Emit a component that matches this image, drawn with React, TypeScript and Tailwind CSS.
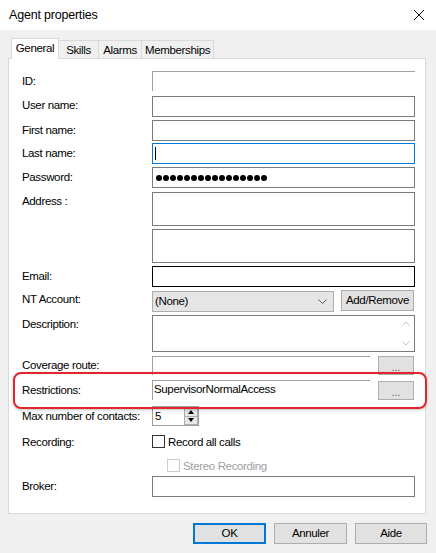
import React from 'react';

const font = "font-['Liberation_Sans',Arial,sans-serif]";

function Label({ children, className = '' }: { children: React.ReactNode; className?: string }) {
  return (
    <div className={`w-[143px] shrink-0 pl-[13px] text-[11.5px] leading-[14px] tracking-[-0.35px] text-black ${className}`}>
      {children}
    </div>
  );
}

function TextBox({ h = 21, className = '', children }: { h?: number; className?: string; children?: React.ReactNode }) {
  return (
    <div
      className={`w-[263px] bg-white border border-[#7a7a7a] flex items-center ${className}`}
      style={{ height: h }}
    >
      {children}
    </div>
  );
}

function DotsButton({ h }: { h: number }) {
  return (
    <div
      className="ml-[8px] w-[36px] bg-[#e1e1e1] border border-[#adadad] flex items-end justify-center pb-[1px] text-[10px] leading-[10px] text-[#555]"
      style={{ height: h }}
    >
      ...
    </div>
  );
}

function Tab({ label, active = false, w }: { label: string; active?: boolean; w: number }) {
  if (active) {
    return (
      <div
        className="h-[21px] -mb-px z-10 bg-white border border-b-0 border-[#d9d9d9] flex items-start justify-center pt-[2px] text-[11.5px] leading-[14px] tracking-[-0.35px]"
        style={{ width: w }}
      >
        {label}
      </div>
    );
  }
  return (
    <div
      className="h-[18px] bg-[#f0f0f0] border border-b-0 border-l-0 border-[#d9d9d9] flex items-center justify-center text-[11.5px] leading-[14px] tracking-[-0.35px]"
      style={{ width: w }}
    >
      {label}
    </div>
  );
}

export default function App() {
  return (
    <div className={`relative w-[436px] h-[553px] bg-[#f0f0f0] overflow-hidden ${font} text-black`}>
      {/* title bar */}
      <div className="h-[30px] bg-white flex items-center justify-between pl-[9px] pr-[11px]">
        <span className="text-[12.5px] tracking-[-0.2px]">Agent properties</span>
        <svg width="12" height="12" viewBox="0 0 12 12">
          <path d="M1 1 L11 11 M11 1 L1 11" stroke="#111" strokeWidth="1" fill="none" />
        </svg>
      </div>

      {/* tabs */}
      <div className="mt-[8px] ml-[11px] flex items-end relative">
        <Tab label="General" active w={48} />
        <Tab label="Skills" w={40} />
        <Tab label="Alarms" w={43} />
        <Tab label="Memberships" w={72} />
      </div>

      {/* panel */}
      <div className="ml-[8px] w-[418px] h-[456px] bg-white border border-[#d9d9d9] flex flex-col pb-[17px]">
        {/* ID */}
        <div className="mt-[12px] flex items-center h-[20px]">
          <Label>ID:</Label>
          <div className="w-[263px] h-[20px] border-t border-l border-[#a0a0a0]" />
        </div>
        {/* User name */}
        <div className="mt-[5px] flex items-center">
          <Label className="-mt-[4px]">User name:</Label>
          <TextBox />
        </div>
        <div className="mt-[3px] flex items-center">
          <Label className="-mt-[2px]">First name:</Label>
          <TextBox />
        </div>
        <div className="mt-[2px] flex items-center">
          <Label className="-mt-[2px]">Last name:</Label>
          <TextBox className="border-[#0078d7]">
            <div className="ml-[2px] w-px h-[13px] bg-black" />
          </TextBox>
        </div>
        <div className="mt-[3px] flex items-center">
          <Label className="-mt-[2px]">Password:</Label>
          <TextBox>
            <div className="ml-[3px] flex gap-[1px]">
              {Array.from({ length: 16 }).map((_, i) => (
                <div key={i} className="w-[6px] h-[6px] rounded-full bg-black" />
              ))}
            </div>
          </TextBox>
        </div>
        {/* Address */}
        <div className="mt-[4px] flex items-start">
          <Label className="pt-[2px]">Address :</Label>
          <TextBox h={34} />
        </div>
        <div className="mt-[3px] flex items-start">
          <Label />
          <TextBox h={34} />
        </div>
        {/* Email */}
        <div className="mt-[3px] flex items-center">
          <Label className="-mt-[2px]">Email:</Label>
          <TextBox className="border-black" />
        </div>
        {/* NT Account */}
        <div className="mt-[3px] flex items-start h-[22px]">
          <Label className="pt-[2px]">NT Account:</Label>
          <div className="mt-[1px] w-[182px] h-[21px] bg-[#e5e5e5] border border-[#adadad] flex items-center justify-between pl-[2px] pr-[6px] text-[11.5px] tracking-[-0.35px]">
            <span>(None)</span>
            <svg width="9" height="6" viewBox="0 0 9 6">
              <path d="M0.5 0.5 L4.5 4.5 L8.5 0.5" stroke="#555" strokeWidth="1" fill="none" />
            </svg>
          </div>
          <div className="ml-[7px] w-[73px] h-[21px] bg-[#e1e1e1] border border-[#adadad] flex items-center justify-center text-[11.5px] tracking-[-0.35px]">
            Add/Remove
          </div>
        </div>
        {/* Description */}
        <div className="mt-[3px] flex items-start">
          <Label className="pt-[2px]">Description:</Label>
          <TextBox h={37} className="justify-end items-stretch">
            <div className="w-[16px] flex flex-col justify-between items-center py-[5px] pr-[1px]">
              <svg width="8" height="5" viewBox="0 0 8 5">
                <path d="M0.5 4.5 L4 1 L7.5 4.5" stroke="#c2c2c2" strokeWidth="1" fill="none" />
              </svg>
              <svg width="8" height="5" viewBox="0 0 8 5">
                <path d="M0.5 0.5 L4 4 L7.5 0.5" stroke="#c2c2c2" strokeWidth="1" fill="none" />
              </svg>
            </div>
          </TextBox>
        </div>
        {/* Coverage route */}
        <div className="mt-[4px] flex items-start h-[19px]">
          <Label className="pt-[2px]">Coverage route:</Label>
          <div className="w-[218px] h-[19px] border-t border-l border-[#a0a0a0]" />
          <DotsButton h={19} />
        </div>
        {/* Restrictions */}
        <div className="mt-[5px] flex items-start h-[20px]">
          <Label className="pt-[3px]">Restrictions:</Label>
          <div className="w-[218px] h-[20px] border-t border-l border-[#a0a0a0] pl-px pt-[1px] text-[11.5px] leading-[14px] tracking-[-0.35px]">
            SupervisorNormalAccess
          </div>
          <div className="mt-px">
            <DotsButton h={19} />
          </div>
        </div>
        {/* Max number of contacts */}
        <div className="mt-[6px] flex items-center h-[20px]">
          <Label className="-mt-[1px]">Max number of contacts:</Label>
          <div className="w-[47px] h-[20px] border border-[#a0a0a0] bg-white flex">
            <div className="flex-1 pl-[2px] text-[11.5px] leading-[18px]">5</div>
            <div className="w-[14px] flex flex-col">
              <div className="flex-1 bg-[#e8e8e8] border border-[#adadad] flex items-center justify-center">
                <svg width="6" height="4" viewBox="0 0 6 4"><path d="M0 4 L3 0 L6 4 Z" fill="#000" /></svg>
              </div>
              <div className="flex-1 bg-[#e8e8e8] border border-t-0 border-[#adadad] flex items-center justify-center">
                <svg width="6" height="4" viewBox="0 0 6 4"><path d="M0 0 L3 4 L6 0 Z" fill="#000" /></svg>
              </div>
            </div>
          </div>
        </div>
        {/* Recording */}
        <div className="mt-[9px] flex items-center h-[13px]">
          <Label>Recording:</Label>
          <div className="w-[13px] h-[13px] border border-[#333] bg-white" />
          <span className="ml-[3px] text-[11.5px] leading-[14px] tracking-[-0.35px]">Record all calls</span>
        </div>
        <div className="mt-[11px] flex items-center h-[13px]">
          <Label />
          <div className="ml-[15px] w-[13px] h-[13px] border border-[#cccccc] bg-white" />
          <span className="ml-[3px] text-[11.5px] leading-[14px] tracking-[-0.35px] text-[#a0a0a0]">Stereo Recording</span>
        </div>
        {/* Broker */}
        <div className="mt-[4px] flex items-center">
          <Label className="-mt-[2px]">Broker:</Label>
          <TextBox />
        </div>
      </div>

      {/* buttons */}
      <div className="mt-[9px] pr-[9px] flex justify-end gap-[8px]">
        <div className="w-[73px] h-[21px] bg-[#e1e1e1] border-2 border-[#0078d7] flex items-center justify-center text-[11.5px] tracking-[-0.35px]">
          OK
        </div>
        <div className="w-[73px] h-[21px] bg-[#e1e1e1] border border-[#adadad] flex items-center justify-center text-[11.5px] tracking-[-0.35px]">
          Annuler
        </div>
        <div className="w-[72px] h-[21px] bg-[#e1e1e1] border border-[#adadad] flex items-center justify-center text-[11.5px] tracking-[-0.35px]">
          Aide
        </div>
      </div>

      {/* red highlight annotation */}
      <div className="absolute left-[13px] top-[372px] w-[414px] h-[37px] rounded-[8px] border-2 border-[#e3262e] shadow-[0_1px_3px_rgba(0,0,0,0.25)] pointer-events-none" />
    </div>
  );
}
